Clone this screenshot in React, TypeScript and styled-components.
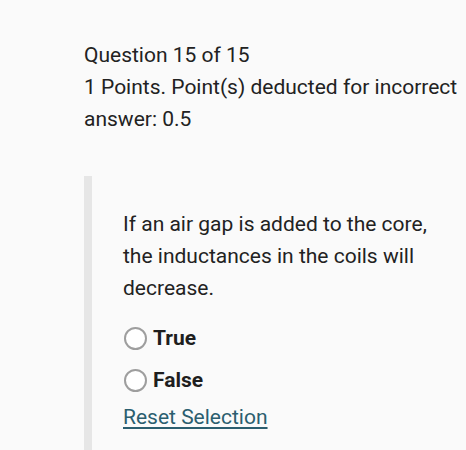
import React from 'react'
import styled, { createGlobalStyle } from 'styled-components'

const GlobalStyle = createGlobalStyle`
  html, body {
    margin: 0;
    padding: 0;
    background: #fafafa;
    overflow: hidden;
  }
  body {
    font-family: Roboto, "Liberation Sans", sans-serif;
    color: #212121;
  }
`

const Page = styled.div`
  padding: 39px 0 0 84px;
  height: 450px;
  box-sizing: border-box;
  display: flex;
  flex-direction: column;
`

const Header = styled.div`
  font-size: 21px;
  line-height: 32px;
  color: #222;
`

const QuestionBlock = styled.div`
  margin-top: 41px;
  flex: 1;
  border-left: 8px solid #e6e6e6;
  padding: 32px 20px 0 31px;
`

const Prompt = styled.p`
  margin: 0;
  font-size: 21px;
  line-height: 32px;
  color: #222;
`

const Options = styled.div`
  margin-top: 13px;
  display: flex;
  flex-direction: column;
`

const Option = styled.label`
  display: flex;
  align-items: center;
  height: 42px;
  gap: 6px;
  font-size: 21px;
  font-weight: 700;
  color: #1e1e1e;
  cursor: pointer;
`

const Radio = styled.span`
  width: 23px;
  height: 23px;
  margin-left: 1px;
  box-sizing: border-box;
  border: 2px solid #9e9e9e;
  border-radius: 50%;
  background: #fff;
`

const ResetLink = styled.a`
  align-self: flex-start;
  margin-top: 5px;
  font-size: 21px;
  line-height: 32px;
  color: #2b5e6f;
  text-decoration: underline;
  text-underline-offset: 3px;
  text-decoration-thickness: 2px;
  cursor: pointer;
`

export default function App() {
  const options = ['True', 'False']
  return (
    <Page>
      <GlobalStyle />
      <Header>
        <div>Question 15 of 15</div>
        <div>1 Points. Point(s) deducted for incorrect answer: 0.5</div>
      </Header>
      <QuestionBlock>
        <Prompt>If an air gap is added to the core, the inductances in the coils will decrease.</Prompt>
        <Options>
          {options.map(o => (
            <Option key={o}>
              <Radio />
              {o}
            </Option>
          ))}
        </Options>
        <ResetLink>Reset Selection</ResetLink>
      </QuestionBlock>
    </Page>
  )
}
